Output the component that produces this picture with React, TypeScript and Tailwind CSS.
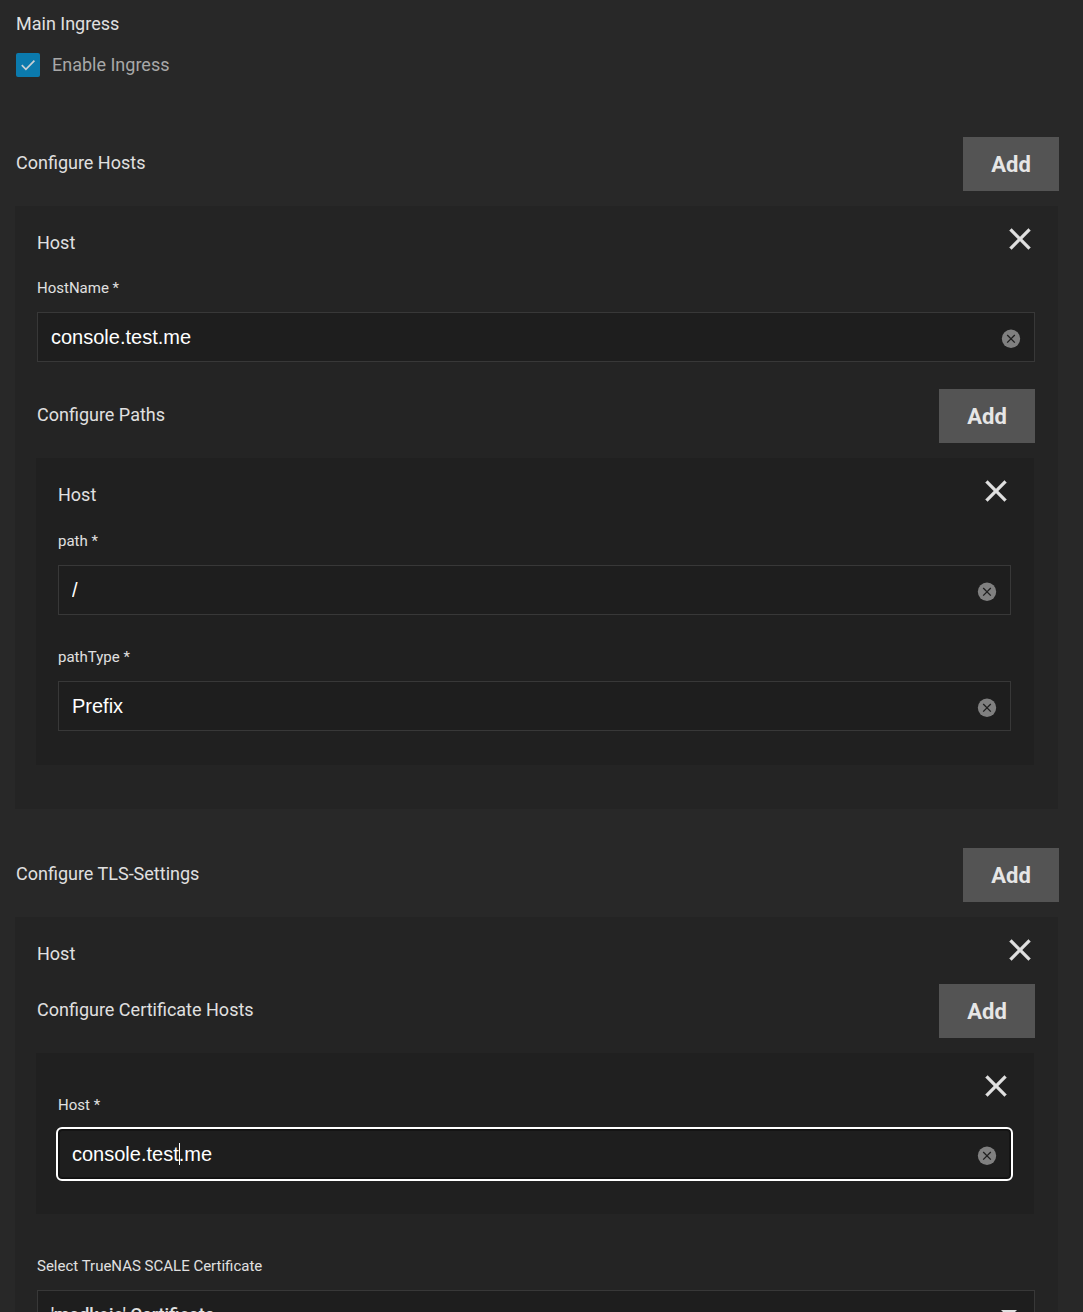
import React, { useEffect, useRef, useState } from "react";

const AddButton = () => (
  <button
    type="button"
    className="h-[54px] w-24 shrink-0 bg-[#545454] pt-0.5 text-[22px] leading-7 font-bold text-[#e6e6e6] hover:bg-[#606060]"
  >
    Add
  </button>
);

const RemoveButton = () => (
  <button type="button" aria-label="Remove" className="-mr-[3px] ml-auto h-9 w-9 shrink-0 text-[#e0e0e0]">
    <svg viewBox="0 0 24 24" className="h-9 w-9" fill="currentColor" stroke="currentColor" strokeWidth="0.3">
      <path d="M19 6.41L17.59 5 12 10.59 6.41 5 5 6.41 10.59 12 5 17.59 6.41 19 12 13.41 17.59 19 19 17.59 13.41 12z" />
    </svg>
  </button>
);

interface ListHeaderProps {
  title: string;
}

const ListHeader = ({ title }: ListHeaderProps) => (
  <div className="flex items-center justify-between pl-px">
    <h2 className="pb-0.5 text-lg leading-6">{title}</h2>
    <AddButton />
  </div>
);

interface PanelProps {
  title?: string;
  className?: string;
  children: React.ReactNode;
}

const Panel = ({ title, className = "", children }: PanelProps) => (
  <section className={`mt-[15px] mr-px pt-[15px] pr-[23px] pl-[21px] ${className}`}>
    <div className="flex items-end pl-px">
      {title && <h3 className="text-lg leading-7">{title}</h3>}
      <RemoveButton />
    </div>
    {children}
  </section>
);

interface TextFieldProps {
  id: string;
  label: string;
  initial: string;
  caretAt?: number;
}

const TextField = ({ id, label, initial, caretAt }: TextFieldProps) => {
  const [value, setValue] = useState(initial);
  const [caretLeft, setCaretLeft] = useState<number | null>(null);
  const inputRef = useRef<HTMLInputElement>(null);

  // The cursor is drawn by hand so that it never blinks
  const updateCaret = () => {
    const input = inputRef.current;
    const ctx = document.createElement("canvas").getContext("2d");
    if (!input || !ctx) return;
    const style = getComputedStyle(input);
    ctx.font = `${style.fontSize} ${style.fontFamily}`;
    const before = input.value.slice(0, input.selectionStart ?? 0);
    const left = parseFloat(style.paddingLeft) + 1 + ctx.measureText(before).width - input.scrollLeft;
    setCaretLeft(Math.round(left));
  };

  // Put the cursor in the field that is being edited
  useEffect(() => {
    if (caretAt === undefined || !inputRef.current) return;
    inputRef.current.focus();
    inputRef.current.setSelectionRange(caretAt, caretAt);
    updateCaret();
  }, [caretAt]);

  return (
    <div className="pl-px">
      <label htmlFor={id} className="block text-[15px] leading-5">
        {label} *
      </label>
      <div className="relative mt-[14px]">
        <input
          id={id}
          ref={inputRef}
          type="text"
          value={value}
          onChange={(e) => {
            setValue(e.target.value);
            updateCaret();
          }}
          onSelect={updateCaret}
          onBlur={() => setCaretLeft(null)}
          className="block h-[50px] w-full border border-[#383838] bg-[#1e1e1e] pr-12 pl-[13px] font-['Liberation_Sans',sans-serif] text-xl text-white caret-transparent focus:rounded-sm focus:border-[#101010] focus:inset-shadow-[0_0_0_1px_#141414] focus:outline-2 focus:outline-white"
        />
        {caretLeft !== null && (
          <span className="pointer-events-none absolute top-[14px] h-[22px] w-px bg-white" style={{ left: caretLeft }} />
        )}
        <button
          type="button"
          aria-label={`Clear ${label}`}
          onClick={() => setValue("")}
          className="absolute top-4 right-[13px] text-[#808080]"
        >
          <svg viewBox="0 0 22 22" className="h-[22px] w-[22px]">
            <circle cx="11" cy="10.8" r="9.2" fill="currentColor" />
            <path d="M7.2 7l7.6 7.6M14.8 7l-7.6 7.6" stroke="#1e1e1e" strokeWidth="1.3" />
          </svg>
        </button>
      </div>
    </div>
  );
};

export default function App() {
  const [enabled, setEnabled] = useState(true);

  return (
    <main className="min-h-screen bg-[#282828] pt-3 pr-6 pl-[15px] font-[Roboto,sans-serif] text-[#e0e0e0]">
      {/* Ingress toggle */}
      <div className="pl-px">
        <h1 className="text-lg leading-6">Main Ingress</h1>
        <label className="mt-[17px] flex w-fit items-center gap-3 text-lg leading-6 text-[#a8a8a8]">
          <span className="grid h-6 w-6">
            <input
              type="checkbox"
              checked={enabled}
              onChange={(e) => setEnabled(e.target.checked)}
              className="col-start-1 row-start-1 h-6 w-6 appearance-none rounded-xs border-2 border-[#a8a8a8] checked:border-0 checked:bg-[#0b7aad]"
            />
            {enabled && (
              <svg viewBox="0 0 24 24" className="pointer-events-none col-start-1 row-start-1 h-6 w-6" fill="none">
                <path d="M5.8 12.2l4.1 4.2 8.5-8.7" stroke="#c9d0d4" strokeWidth="1.7" />
              </svg>
            )}
          </span>
          Enable Ingress
        </label>
      </div>

      {/* Hosts */}
      <div className="mt-[60px]">
        <ListHeader title="Configure Hosts" />
        <Panel title="Host" className="bg-[#242424] pb-11">
          <div className="mt-[21px] mb-[27px]">
            <TextField id="hostname" label="HostName" initial="console.test.me" />
          </div>
          <ListHeader title="Configure Paths" />
          <Panel title="Host" className="bg-[#202020] pb-[34px]">
            <div className="mt-[22px] flex flex-col gap-8">
              <TextField id="path" label="path" initial="/" />
              <TextField id="path-type" label="pathType" initial="Prefix" />
            </div>
          </Panel>
        </Panel>
      </div>

      {/* TLS */}
      <div className="mt-[39px]">
        <ListHeader title="Configure TLS-Settings" />
        <Panel title="Host" className="bg-[#242424] pb-11">
          <div className="mt-4">
            <ListHeader title="Configure Certificate Hosts" />
          </div>
          <Panel className="bg-[#202020] pb-[35px]">
            <div className="-mt-[9px]">
              <TextField id="tls-host" label="Host" initial="console.test.me" caretAt={12} />
            </div>
          </Panel>
          <div className="mt-[42px] pl-px">
            <label htmlFor="certificate" className="block text-[15px] leading-5">
              Select TrueNAS SCALE Certificate
            </label>
            <div className="relative mt-[14px]">
              <select
                id="certificate"
                className="block h-[50px] w-full appearance-none border border-[#383838] bg-[#1e1e1e] px-[13px] text-lg font-medium text-[#e0e0e0]"
              >
                <option>'madkojc' Certificate</option>
              </select>
              <svg viewBox="0 0 16 8" className="pointer-events-none absolute top-5 right-[18px] h-2 w-4" fill="currentColor">
                <path d="M0 0h16L8 8z" />
              </svg>
            </div>
          </div>
        </Panel>
      </div>
    </main>
  );
}
